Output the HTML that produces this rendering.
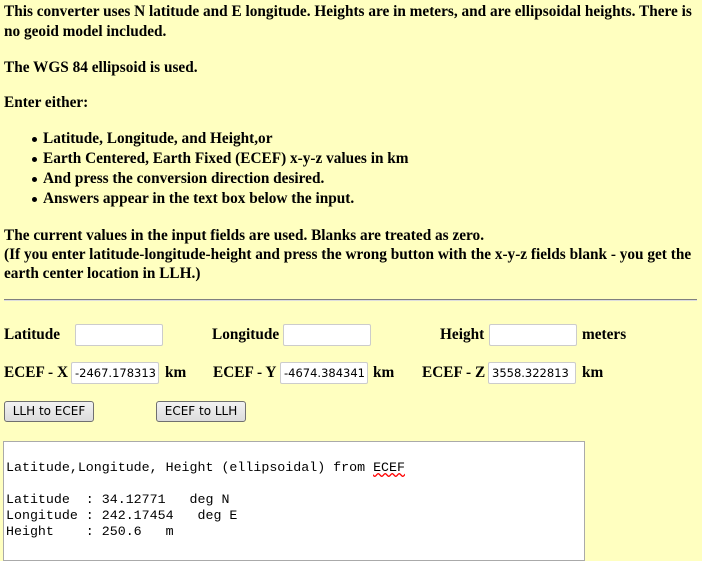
<!DOCTYPE html>
<html><head><style>
body{margin:0;background:#ffffc0;width:702px;height:548px;overflow:hidden;position:relative;font-family:"Liberation Serif",serif;font-weight:bold;font-size:15.3px;color:#000}
.a{position:absolute;white-space:nowrap;line-height:20px}
.in{position:absolute;height:20px;width:88px;background:#fff;border:1px solid #ccc;border-radius:2px;font:11.5px "DejaVu Sans",sans-serif;font-weight:normal;line-height:20px;padding-left:3px;box-sizing:border-box;overflow:hidden}
.b{position:absolute;height:21px;border:1px solid #707070;border-radius:3px;background:linear-gradient(#f2f2f2,#dcdcdc);font:12px "DejaVu Sans",sans-serif;line-height:19px;text-align:center;box-sizing:border-box}
.li{position:absolute;left:43px;white-space:nowrap;line-height:20px}
.li:before{content:"";position:absolute;left:-11px;top:8px;width:5px;height:5px;border-radius:50%;background:#000}
</style></head><body>
<div class="a" style="left:4px;top:2px;width:694px;white-space:normal">This converter uses N latitude and E longitude. Heights are in meters, and are ellipsoidal heights. There is no geoid model included.</div>
<div class="a" style="left:4px;top:58px">The WGS 84 ellipsoid is used.</div>
<div class="a" style="left:4px;top:93px">Enter either:</div>
<div class="li" style="top:129px">Latitude, Longitude, and Height,or</div>
<div class="li" style="top:149px">Earth Centered, Earth Fixed (ECEF) x-y-z values in km</div>
<div class="li" style="top:169px">And press the conversion direction desired.</div>
<div class="li" style="top:189px">Answers appear in the text box below the input.</div>
<div class="a" style="left:4px;top:226px">The current values in the input fields are used. Blanks are treated as zero.</div>
<div class="a" style="left:4px;top:245px">(If you enter latitude-longitude-height and press the wrong button with the x-y-z fields blank - you get the</div>
<div class="a" style="left:4px;top:264px">earth center location in LLH.)</div>
<div style="position:absolute;left:4px;top:299px;width:693px;height:0;border-top:1px solid #808080;border-bottom:1px solid #ddd"></div>
<div class="a" style="left:4px;top:325px">Latitude</div>
<div class="in" style="left:75px;top:324px;height:22px"></div>
<div class="a" style="left:212px;top:325px">Longitude</div>
<div class="in" style="left:283px;top:324px;height:22px"></div>
<div class="a" style="left:440px;top:325px">Height</div>
<div class="in" style="left:489px;top:324px;height:22px"></div>
<div class="a" style="left:582px;top:325px">meters</div>
<div class="a" style="left:4px;top:363px">ECEF - X</div>
<div class="in" style="left:71px;top:362px;height:22px">-2467.178313</div>
<div class="a" style="left:165px;top:363px">km</div>
<div class="a" style="left:213px;top:363px">ECEF - Y</div>
<div class="in" style="left:280px;top:362px;height:22px">-4674.384341</div>
<div class="a" style="left:373px;top:363px">km</div>
<div class="a" style="left:422px;top:363px">ECEF - Z</div>
<div class="in" style="left:488px;top:362px;height:22px">3558.322813</div>
<div class="a" style="left:582px;top:363px">km</div>
<div class="b" style="left:4px;top:401px;width:90px">LLH to ECEF</div>
<div class="b" style="left:156px;top:401px;width:90px">ECEF to LLH</div>
<div style="position:absolute;left:3px;top:441px;width:582px;height:120px;background:#fff;border:1px solid #aaa;box-sizing:border-box"></div>
<pre style="position:absolute;left:6px;top:460px;margin:0;font:13.3px 'Liberation Mono',monospace;line-height:16px;font-weight:normal">Latitude,Longitude, Height (ellipsoidal) from <span style="text-decoration:underline wavy red">ECEF</span>

Latitude  : 34.12771   deg N
Longitude : 242.17454   deg E
Height    : 250.6   m</pre>
</body></html>
